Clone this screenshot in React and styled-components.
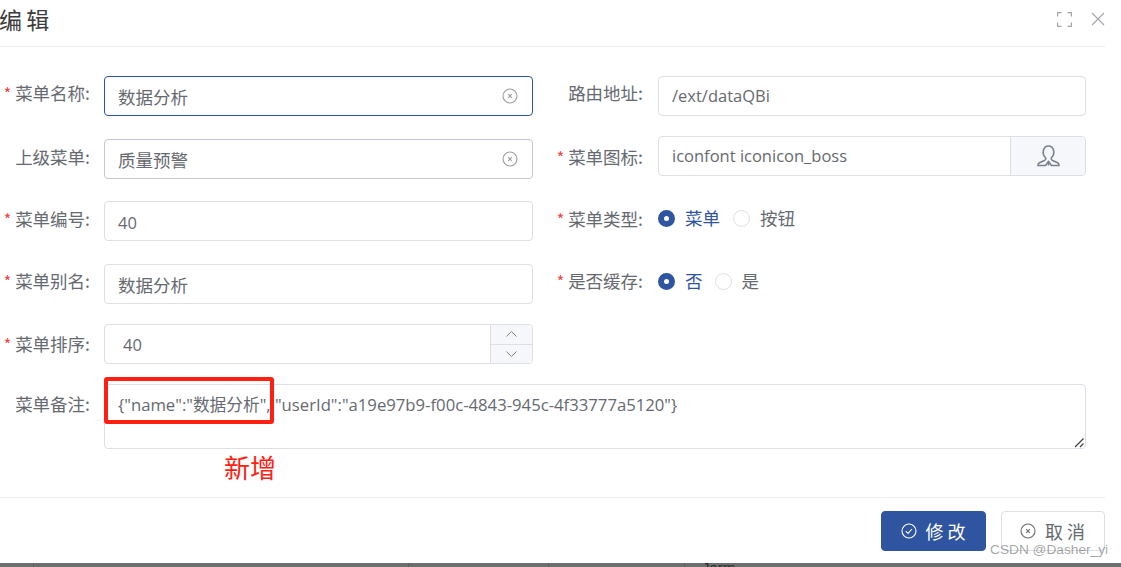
import React from "react";
import styled, { createGlobalStyle } from "styled-components";

const Global = createGlobalStyle`
  html, body { margin: 0; padding: 0; background: #fff; }
  body { width: 1121px; height: 567px; overflow: hidden; font-family: "Open Sans", "Noto Sans CJK SC", sans-serif; }
  * { box-sizing: border-box; }
`;

const Page = styled.div`
  position: relative;
  width: 1121px;
  height: 567px;
  display: flex;
  flex-direction: column;
  overflow: hidden;
  color: #606266;
`;
const Dialog = styled.div`
  width: 1105px;
  height: 563px;
  display: flex;
  flex-direction: column;
`;
const Header = styled.header`
  height: 47px;
  flex: none;
  border-bottom: 1px solid #ebeef5;
  display: flex;
  align-items: center;
  justify-content: space-between;
  padding: 0 0 8px 0;
`;
const Title = styled.h2`
  margin: 0 0 0 -1px;
  font: 400 23px/28px "Noto Sans CJK SC", sans-serif;
  color: #3c3c3c;
  word-spacing: -1px;
`;
const HeaderTools = styled.div`
  display: flex;
  align-items: center;
  gap: 19px;
  color: #a3a6ab;
`;
const Form = styled.form`
  flex: 1;
  padding-top: 29px;
  display: flex;
  flex-direction: column;
`;
const Row = styled.div`
  display: grid;
  grid-template-columns: 533px 553px;
  height: ${(p) => p.$h || 40}px;
  margin-bottom: ${(p) => p.$gap ?? 23}px;
`;
const Item = styled.div`
  display: grid;
  grid-template-columns: ${(p) => (p.$wide ? "90px 982px" : p.$right ? "90px 428px" : "90px 429px")};
  grid-column: ${(p) => (p.$wide ? "1 / 3" : "auto")};
  column-gap: ${(p) => (p.$right ? "15px" : "14px")};
  align-items: start;
  margin-left: ${(p) => (p.$right ? "20px" : "0")};
`;
const Label = styled.label`
  display: block;
  text-align: right;
  font: 400 17.5px/34px "Noto Sans CJK SC", sans-serif;
  color: #666a70;
  white-space: nowrap;
  margin-top: ${(p) => p.$mt || 0}px;
  &::before {
    content: ${(p) => (p.$required ? '"*"' : '""')};
    color: #f5403c;
    margin-right: 4px;
    font-size: 16px;
  }
`;
const Field = styled.div`
  height: 40px;
  display: flex;
  align-items: center;
  border: 1px solid ${(p) => p.$border || "#dcdfe6"};
  border-radius: 4px;
  background: #fff;
  overflow: hidden;
  margin-top: ${(p) => p.$mt || 0}px;
`;
const Value = styled.span`
  flex: 1;
  padding-left: ${(p) => p.$pl || 13}px;
  font: 400 ${(p) => (p.$cjk ? 17.5 : 16.5)}px/38px "Open Sans", "Noto Sans CJK SC", sans-serif;
  color: #666a70;
  white-space: nowrap;
  padding-top: ${(p) => p.$pt || 0}px;
`;
const ClearIcon = styled.span`
  display: flex;
  margin-right: 14px;
  color: #9a9ca1;
`;
const Append = styled.div`
  width: 75px;
  height: 100%;
  background: #f5f7fa;
  border-left: 1px solid #dcdfe6;
  display: flex;
  align-items: center;
  justify-content: center;
  color: #7c828b;
`;
const Stepper = styled.div`
  width: 42px;
  height: 100%;
  background: #f5f7fa;
  border-left: 1px solid #dcdfe6;
  display: flex;
  flex-direction: column;
`;
const StepBtn = styled.div`
  flex: 1;
  display: flex;
  align-items: center;
  justify-content: center;
  color: #7f8388;
  & + & { border-top: 1px solid #dcdfe6; }
`;
const RadioGroup = styled.div`
  display: flex;
  align-items: center;
  height: 34px;
`;
const RadioOption = styled.span`
  display: flex;
  align-items: center;
  margin-right: ${(p) => p.$gap || 13}px;
  font: 400 17.5px/36px "Noto Sans CJK SC", sans-serif;
  color: ${(p) => (p.$checked ? "#2f55a0" : "#666a70")};
`;
const RadioDot = styled.span`
  width: 17px;
  height: 17px;
  border-radius: 50%;
  margin-right: 10px;
  background: #fff;
  border: ${(p) => (p.$checked ? "6px solid #2f55a0" : "1px solid #dcdfe6")};
`;
const Note = styled.div`
  position: relative;
  height: 65px;
  border: 1px solid #dcdfe6;
  border-radius: 4px;
  padding: 4px 13px;
  font: 400 16.7px/32px "Open Sans", "Noto Sans CJK SC", sans-serif;
  color: #666a70;
  white-space: nowrap;
`;
const Grip = styled.svg`
  position: absolute;
  right: 0;
  bottom: 0;
`;
const RedFrame = styled.div`
  position: absolute;
  left: 104px;
  top: 377px;
  width: 170px;
  height: 47px;
  border: 4px solid #ff2012;
  border-radius: 3px;
  pointer-events: none;
`;
const Annotation = styled.div`
  position: absolute;
  left: 224px;
  top: 449px;
  font: 400 26px/36px "Noto Sans CJK SC", sans-serif;
  color: #ff2012;
`;
const Footer = styled.footer`
  flex: none;
  height: 66px;
  border-top: 1px solid #ebeef5;
  display: flex;
  justify-content: flex-end;
  gap: 15px;
  padding-top: 13px;
`;
const Button = styled.button`
  width: ${(p) => p.$w}px;
  height: 40px;
  border-radius: 4px;
  border: 1px solid ${(p) => (p.$primary ? "#2f55a0" : "#dcdfe6")};
  background: ${(p) => (p.$primary ? "#2f55a0" : "#fff")};
  color: ${(p) => (p.$primary ? "#fff" : "#666a70")};
  font: 400 18px/1 "Noto Sans CJK SC", sans-serif;
  letter-spacing: 4px;
  display: flex;
  align-items: center;
  justify-content: center;
  gap: 9px;
  padding: 0 0 0 3px;
`;
const BottomBar = styled.div`
  flex: none;
  height: 4px;
  background: #6e6e6e;
  display: flex;
  overflow: hidden;
`;
const BarCell = styled.div`
  flex: none;
  width: ${(p) => p.$w}px;
  height: 4px;
  border-right: 1px solid #5f5f5f;
`;
const BarText = styled.div`
  height: 4px;
  padding-left: 17px;
  font: 400 15px/9px "Liberation Sans", sans-serif;
  color: #2c2c2c;
  overflow: hidden;
`;
const Watermark = styled.div`
  position: absolute;
  left: 990px;
  top: 541px;
  font: 400 13.7px/18px "Liberation Sans", sans-serif;
  color: rgba(90, 90, 90, 0.55);
  white-space: nowrap;
`;

const Circle = ({ size = 16, children }) => (
  <svg width={size} height={size} viewBox="0 0 16 16" fill="none" stroke="currentColor" strokeWidth="1.1">
    <circle cx="8" cy="8" r="7" />
    {children}
  </svg>
);
const XMark = () => <path d="M6.2 6.2l3.6 3.6M9.8 6.2l-3.6 3.6" />;

const Clearable = ({ children, border }) => (
  <Field $border={border}>
    <Value $cjk $pt={1}>{children}</Value>
    <ClearIcon>
      <Circle>
        <XMark />
      </Circle>
    </ClearIcon>
  </Field>
);

const BossIcon = () => (
  <svg width="25" height="25" viewBox="0 0 25 25" fill="none" stroke="currentColor" strokeWidth="1.6">
    <path d="M9.800 14C7.600 12 6.800 9.300 7.400 6.500 8 3.600 10 2 12.500 2s4.500 1.600 5.100 4.500c.6 2.800-.2 5.500-2.400 7.500-.2 1.200.4 2 1.400 2.500l5 2.300c1 .5 1.400 1.400 1.400 2.700h-7.600l-1.900-2.800-1-1.200-1 1.200-1.900 2.800H2c0-1.300.4-2.200 1.400-2.700l5-2.300c1-.5 1.600-1.300 1.400-2.500z" />
    <path d="M12.500 17.500v4" />
  </svg>
);

export default function App() {
  return (
    <Page>
      <Global />
      <Dialog>
        <Header>
          <Title>编 辑</Title>
          <HeaderTools>
            <svg width="15" height="15" viewBox="0 0 15 15" fill="none" stroke="currentColor" strokeWidth="1.2">
              <path d="M.6 4.500V.6h3.900M10.500.6h3.900v3.900M14.400 10.500v3.900h-3.900M4.500 14.400H.6v-3.900" />
            </svg>
            <svg width="14" height="14" viewBox="0 0 14 14" fill="none" stroke="currentColor" strokeWidth="1.1">
              <path d="M1 1l12 12M13 1L1 13" />
            </svg>
          </HeaderTools>
        </Header>
        <Form>
          <Row>
            <Item>
              <Label $required>菜单名称:</Label>
              <Clearable border="#2f55a0">数据分析</Clearable>
            </Item>
            <Item $right>
              <Label>路由地址:</Label>
              <Field>
                <Value>/ext/dataQBi</Value>
              </Field>
            </Item>
          </Row>
          <Row $gap={22}>
            <Item>
              <Label $mt={1}>上级菜单:</Label>
              <Clearable border="#c4c8d0">质量预警</Clearable>
            </Item>
            <Item $right>
              <Label $required $mt={1}>菜单图标:</Label>
              <Field $mt={-3}>
                <Value>iconfont iconicon_boss</Value>
                <Append>
                  <BossIcon />
                </Append>
              </Field>
            </Item>
          </Row>
          <Row>
            <Item>
              <Label $required $mt={1}>菜单编号:</Label>
              <Field>
                <Value $pt={3}>40</Value>
              </Field>
            </Item>
            <Item $right>
              <Label $required $mt={1}>菜单类型:</Label>
              <RadioGroup>
                <RadioOption $checked>
                  <RadioDot $checked />
                  菜单
                </RadioOption>
                <RadioOption>
                  <RadioDot />
                  按钮
                </RadioOption>
              </RadioGroup>
            </Item>
          </Row>
          <Row $gap={20}>
            <Item>
              <Label $required>菜单别名:</Label>
              <Field>
                <Value $cjk $pt={1}>数据分析</Value>
              </Field>
            </Item>
            <Item $right>
              <Label $required>是否缓存:</Label>
              <RadioGroup>
                <RadioOption $checked $gap={12}>
                  <RadioDot $checked />
                  否
                </RadioOption>
                <RadioOption>
                  <RadioDot />
                  是
                </RadioOption>
              </RadioGroup>
            </Item>
          </Row>
          <Row $gap={20}>
            <Item>
              <Label $required $mt={3}>菜单排序:</Label>
              <Field>
                <Value $pl={18} $pt={1}>40</Value>
                <Stepper>
                  <StepBtn>
                    <svg width="13" height="8" viewBox="0 0 13 8" fill="none" stroke="currentColor">
                      <path d="M1.500 6.500L6.500 1.500l5 5" />
                    </svg>
                  </StepBtn>
                  <StepBtn>
                    <svg width="13" height="8" viewBox="0 0 13 8" fill="none" stroke="currentColor">
                      <path d="M1.500 1.500l5 5 5-5" />
                    </svg>
                  </StepBtn>
                </Stepper>
              </Field>
            </Item>
          </Row>
          <Row $h={65} $gap={0}>
            <Item $wide>
              <Label $mt={3}>菜单备注:</Label>
              <Note>
                {'{"name":"数据分析", "userId":"a19e97b9-f00c-4843-945c-4f33777a5120"}'}
                <Grip width="12" height="12" viewBox="0 0 12 12" fill="none" stroke="#444" strokeWidth="1.3">
                  <path d="M2 11l8.500-8.500M7 11l3.500-3.500" />
                </Grip>
              </Note>
            </Item>
          </Row>
        </Form>
        <Footer>
          <Button $primary $w={105}>
            <Circle size={16}>
              <path d="M4.800 8.200l2.200 2.200 4-4.400" />
            </Circle>
            修改
          </Button>
          <Button $w={104}>
            <Circle size={16}>
              <XMark />
            </Circle>
            取消
          </Button>
        </Footer>
      </Dialog>
      <BottomBar>
        <BarCell $w={34} />
        <BarCell $w={375} />
        <BarCell $w={140} />
        <BarCell $w={136} />
        <BarText>Jarm</BarText>
      </BottomBar>
      <RedFrame />
      <Annotation>新增</Annotation>
      <Watermark>CSDN @Dasher_yi</Watermark>
    </Page>
  );
}
